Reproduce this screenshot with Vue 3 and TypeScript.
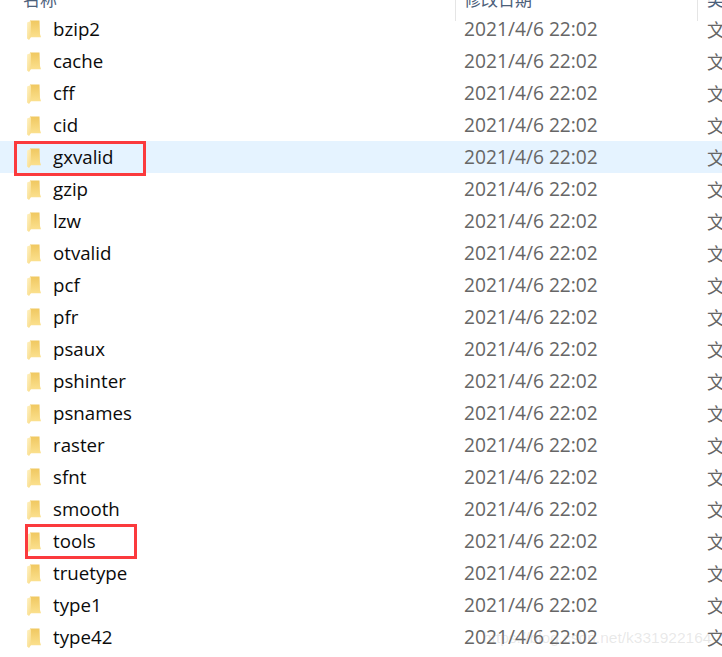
<script setup lang="ts">
const names: string[] = ['bzip2','cache','cff','cid','gxvalid','gzip','lzw','otvalid','pcf','pfr','psaux','pshinter','psnames','raster','sfnt','smooth','tools','truetype','type1','type42']
</script>

<template>
  <div class="page">
    <div class="head">
      <span class="h h1">名称</span>
      <span class="h h2">修改日期</span>
      <span class="h h3">类型</span>
    </div>
    <i class="sep sep1"></i>
    <i class="sep sep2"></i>
    <div v-for="n in names" :key="n" class="row" :class="{ sel: n === 'gxvalid' }">
      <svg class="folder" viewBox="0 0 14 20" width="14" height="20">
        <defs>
          <linearGradient id="fb" x1="0" y1="0" x2="0" y2="1">
            <stop offset="0" stop-color="#f0c860"/>
            <stop offset="1" stop-color="#fbe08e"/>
          </linearGradient>
          <linearGradient id="ff" x1="0" y1="0" x2="1" y2="1">
            <stop offset="0" stop-color="#fff3c8"/>
            <stop offset="1" stop-color="#f8d981"/>
          </linearGradient>
        </defs>
        <path d="M3 .5h9.500L13 14l1 3.200H3z" fill="url(#fb)"/>
        <path d="M0 2.500l4-1.500v16l-2 3-2-1.500z" fill="url(#ff)"/>
      </svg>
      <span class="name">{{ n }}</span>
      <span class="date">2021/4/6 22:02</span>
      <span class="type">文</span>
    </div>
    <div class="mark mark1"></div>
    <div class="mark mark2"></div>
    <span class="wm">https://blog.csdn.net/k331922164</span>
  </div>
</template>

<style>
html, body { margin: 0; background: #fff; }
</style>

<style scoped>
.page {
  position: relative;
  width: 722px;
  height: 657px;
  overflow: hidden;
  background: #fff;
  font-family: "Open Sans", "Noto Sans CJK SC", sans-serif;
}
.head {
  position: relative;
  height: 13px;
  overflow: hidden;
}
.h {
  position: absolute;
  top: -13px;
  font-size: 17px;
  line-height: 24px;
  color: #4c607a;
  font-family: "Noto Sans CJK SC", sans-serif;
}
.h1 { left: 23px; }
.h2 { left: 464px; }
.h3 { left: 707px; }
.sep {
  position: absolute;
  top: 0;
  width: 1px;
  height: 21px;
  background: #e5e5e5;
}
.sep1 { left: 455px; }
.sep2 { left: 697px; }
.row {
  display: flex;
  align-items: center;
  height: 32px;
  padding-left: 27px;
  font-size: 18.700px;
  line-height: 30px;
  white-space: nowrap;
}
.sel { background: #e5f3ff; }
.folder { flex: none; width: 14px; height: 20px; margin-top: 1px; }
.name { flex: none; width: 411px; margin-left: 12px; color: #0b0b0b; }
.date { flex: none; width: 243px; color: #666; font-size: 19.200px; }
.type { flex: none; color: #666; font-family: "Noto Sans CJK SC", sans-serif; }
.mark {
  position: absolute;
  box-sizing: border-box;
  border: 3px solid #fb3a3d;
}
.mark1 { left: 14px; top: 141px; width: 132px; height: 35px; }
.mark2 { left: 25px; top: 524px; width: 112px; height: 35px; }
.wm {
  position: absolute;
  left: 483px;
  top: 629px;
  font-family: "Liberation Sans", sans-serif;
  font-size: 15.500px;
  color: rgba(150, 150, 150, 0.22);
  white-space: nowrap;
}
</style>
